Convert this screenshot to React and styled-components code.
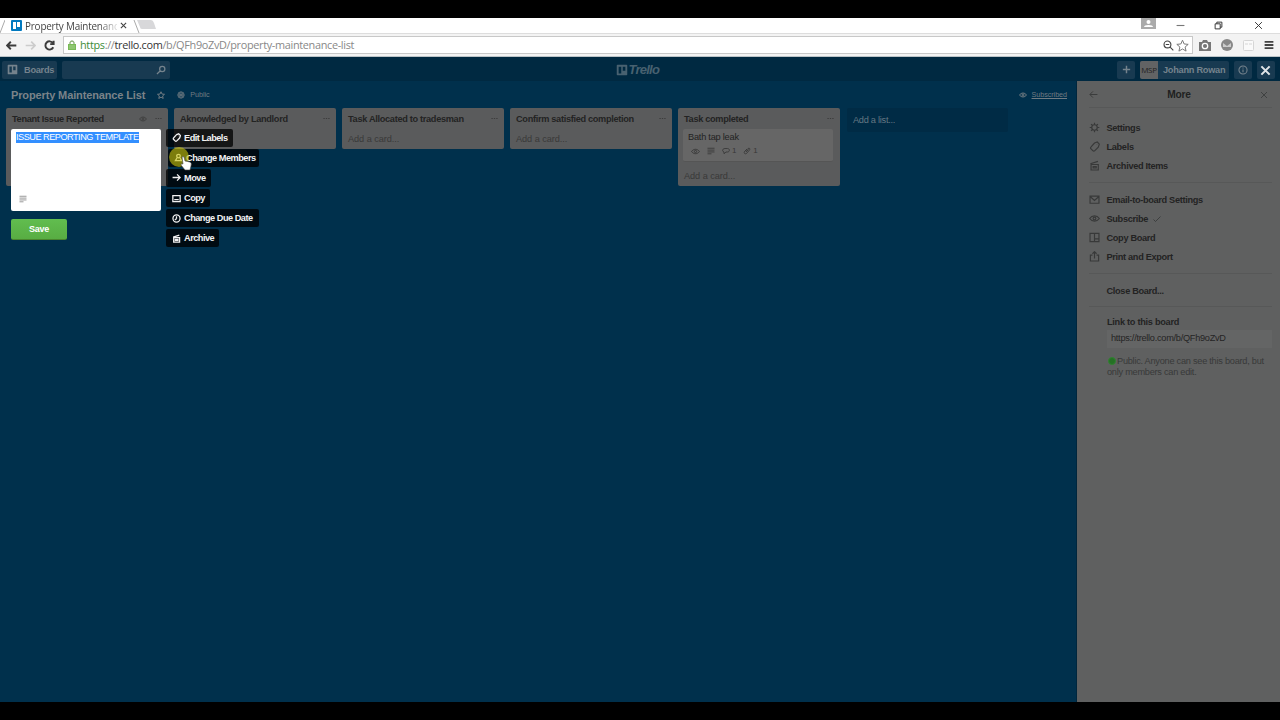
import React from 'react'
import styled, { createGlobalStyle } from 'styled-components'

const GlobalStyle = createGlobalStyle`
	* {
		box-sizing: border-box;
	}

	body {
		margin: 0;
		background: #000;
		font-family: "Liberation Sans", Arial, sans-serif;
		font-size: 9.2px;
		line-height: 12px;
	}

	svg {
		display: block;
		flex: none;
	}
`

const icons = {
  board: <path d="M2 1h12q1 0 1 1v12q0 1-1 1H2q-1 0-1-1V2q0-1 1-1zM3.500 3.500v9h3.500v-9zM9 3.500v5.500h3.500V3.500z" fill="currentColor" fillRule="evenodd" stroke="none" />,
  boardOutline: <g><path d="M1.500 2h13v12h-13zM8 2v12M8 10h6.500" /></g>,
  search: <path d="M10 2a4.200 4.200 0 1 1 0 8.400a4.200 4.200 0 0 1 0-8.400M7 9.200L1.500 14.500" />,
  zoomOut: <path d="M6.500 1.500a5 5 0 1 1 0 10a5 5 0 0 1 0-10M10 10l5 5M4 6.500h5" />,
  star: <path d="M8 1.500l2 4.600 5 .5-3.800 3.300 1.200 5L8 12.300 3.600 14.900l1.200-5L1 6.600l5-.5z" />,
  globe: <g><circle cx="8" cy="8" r="6.300" /><path d="M8 1.500v13M1.500 8h13M4 3.500c3 3 3 6 0 9M12 3.500c-3 3-3 6 0 9" /></g>,
  eye: <g><path d="M1 8c3.500-5.200 10.500-5.200 14 0c-3.500 5.200-10.500 5.200-14 0z" /><circle cx="8" cy="8" r="2" /></g>,
  gear: <g><circle cx="8" cy="8" r="4" /><path d="M8 1v3M8 12v3M1 8h3M12 8h3M3 3l2 2M11 11l2 2M13 3l-2 2M5 11l-2 2" /></g>,
  label: <g><path d="M8 3l4-1.500 3 3-1.500 4.500-5 5c-1 1-2 1-3 0l-2.500-2.500c-1-1-1-2 0-3z" /><path d="M11.500 5v.500" /></g>,
  archive: <path d="M2 5.500L13 2M3 6.500h10.500v8H3zM6 9.500h4.500v2H6z" />,
  mail: <path d="M1.500 3h13v10.500h-13zM2 4l6 5.500L14 4" />,
  share: <path d="M5 6H2v8.500h12V6h-3M8 11V1.500M5 4l3-3 3 3" />,
  check: <path d="M1 9l4 4L15 3" />,
  close: <path d="M2 2l12 12M14 2L2 14" />,
  minus: <path d="M1 8h14" />,
  restore: <path d="M2 5h9v9H2zM5 5V2h9v9h-3" />,
  plus: <path d="M8 1.500v13M1.500 8h13" />,
  left: <path d="M15 8H2M7 2.500L1.500 8L7 13.500" />,
  right: <path d="M1 8h13M9 2.500L14.500 8L9 13.500" />,
  reload: <path d="M13.500 10.500a6 6 0 1 1-.5-6M14 1v5H9" />,
  info: <g><circle cx="8" cy="8" r="6.500" /><path d="M8 7v4.500M8 4v1.500" /></g>,
  clock: <g><circle cx="8" cy="8" r="6.300" /><path d="M8 8.500V4M8 8.500l-3 2" /></g>,
  text: <path d="M1 2.500h14M1 6.200h14M1 9.900h14M1 13.600h8" />,
  comment: <path d="M6 3h5c5 0 5 7 0 7H8l-4 3.500V10C-.5 9 .5 3 6 3z" />,
  clip: <path d="M4 9l6-6c3-2 5 1 3 3l-6 7c-3 2-6-1-4-4l5-5M6 10l5-5" />,
  person: <g><circle cx="8" cy="5.500" r="3.200" /><path d="M5.500 8.500L2.500 13.500h11L10.500 8.500" /></g>,
  card: <path d="M1.500 3h13v10.500h-13zM4 10h8" />,
  menu: <path d="M1 3h14M1 8h14M1 13h14" />,
  dots: <path d="M1 8h3M6.500 8h3M12 8h3" />,
}

const Icon = ({ name, size = 9, weight = 1.7, color = 'currentColor' }) => (
  <svg width={size} height={size} viewBox="0 0 16 16" color={color === 'currentColor' ? undefined : color} fill="none" stroke={color} strokeWidth={weight}>
    {icons[name]}
  </svg>
)

const Screen = styled.div`
	width: 1280px;
	height: 720px;
	padding: 18px 0;
	overflow: hidden;
	position: relative;
	display: flex;
	flex-direction: column;
`

const TabStrip = styled.div`
	height: 15px;
	flex: none;
	background: #fff;
	display: flex;
	font: 9.9px/14px "Open Sans", sans-serif;
	color: #444;
`

const Tab = styled.div`
	width: 124px;
	padding-left: 6px;
	display: flex;
	align-items: center;
	gap: 3px;
`

const TabTitle = styled.span`
	width: 92px;
	white-space: nowrap;
	letter-spacing: -0.18px;
	mask-image: linear-gradient(to right, #000 80%, transparent 104%);
`

const WindowButtons = styled.div`
	margin-left: auto;
	display: flex;
	align-items: center;
	color: #333;
`

const Profile = styled.div`
	width: 15px;
	height: 11px;
	margin: 0 20px 4px 0;
	background: #aaa;
	color: #fff;
	display: flex;
	align-items: center;
	justify-content: center;
`

const WindowButton = styled.div`
	width: 10px;
	margin-right: ${p => p.$gap}px;
`

const Toolbar = styled.div`
	height: 24px;
	flex: none;
	background: #f3f3f3;
	border-top: 1px solid #ddd;
	border-bottom: 1px solid #bcc4c8;
	padding-left: 6px;
	display: flex;
	align-items: center;
	color: #444;
`

const NavButton = styled.div`
	width: 19px;
	flex: none;
	color: ${p => p.$off ? '#ccc' : '#3c3c3c'};
`

const Address = styled.div`
	width: 1130px;
	height: 18px;
	flex: none;
	background: #fff;
	border: 1px solid #c8c8c8;
	padding: 0 3px 0 4px;
	display: flex;
	align-items: center;
	font: 10.9px/16px "Open Sans", sans-serif;
	letter-spacing: -0.33px;
	color: #888;
`

const Url = styled.div`
	flex: 1;
	margin-left: 4px;
	b {
		font-weight: 400;
		color: #3d8b37;
	}
	span {
		color: #333;
	}
`

const Extensions = styled.div`
	margin-left: 6px;
	display: flex;
	align-items: center;
	gap: 10px;
`

const Header = styled.div`
	height: 24px;
	flex: none;
	padding: 1px 5px 0 2px;
	background: #002941;
	display: grid;
	grid-template-columns: 1fr 46px 1fr;
	align-items: center;
	color: #5c6f7d;
`

const HeaderGroup = styled.div`
	display: flex;
	gap: ${p => p.$gap}px;
	justify-content: ${p => p.$end ? 'flex-end' : 'flex-start'};
`

const HeaderButton = styled.div`
	width: ${p => p.$width}px;
	height: 18px;
	background: #183a51;
	border-radius: 2px;
	display: flex;
	align-items: center;
	justify-content: ${p => p.$align || 'center'};
	padding: ${p => p.$pad || '0'};
	font-weight: 700;
	letter-spacing: -0.25px;
	gap: 6px;
	color: #75838d;
`

const Avatar = styled.div`
	width: 18px;
	height: 18px;
	background: #626364;
	color: #222;
	font: 8px/18px "Open Sans", sans-serif;
	text-align: center;
	border-radius: 2px 0 0 2px;
	margin-right: -1px;
`

const Logo = styled.div`
	display: flex;
	align-items: center;
	gap: 1px;
	color: #486170;
	font: italic 700 13px/16px "Liberation Sans", sans-serif;
	letter-spacing: -0.75px;
`

const Main = styled.div`
	flex: 1;
	display: flex;
	background: #00304c;
`

const Board = styled.div`
	width: 1077px;
	flex: none;
	border-right: 1px solid #00263d;
`

const BoardHeader = styled.div`
	height: 26px;
	padding: 1px 9px 0 11px;
	display: flex;
	align-items: center;
	color: #707b82;
	font-size: 7.2px;
`

const BoardTitle = styled.h1`
	margin: 0 12px 0 0;
	font-size: 11px;
	letter-spacing: -0.13px;
	color: #7a8389;
`

const Visibility = styled.div`
	display: flex;
	align-items: center;
	gap: 5px;
	margin-left: 12px;
	letter-spacing: -0.05px;
`

const Subscribed = styled(Visibility)`
	margin-left: auto;
	text-decoration: underline;
`

const Lists = styled.div`
	display: flex;
	align-items: flex-start;
	gap: 6px;
	padding: 1px 0 0 6px;
`

const List = styled.div`
	width: 162px;
	min-height: ${p => p.$height}px;
	background: #5a5b5c;
	border-radius: 2px;
	padding: 4px 6px 4px;
	display: flex;
	flex-direction: column;
`

const ListHeader = styled.div`
	display: flex;
	align-items: center;
	height: 13px;
	gap: 8px;
	margin-bottom: 4px;
	font-weight: 700;
	color: #232323;
`

const ListName = styled.span`
	flex: 1;
	white-space: nowrap;
	letter-spacing: -0.31px;
`

const AddCard = styled.div`
	margin-top: auto;
	color: #393939;
	letter-spacing: -0.06px;
`

const Card = styled.div`
	width: 150px;
	height: 33px;
	margin-left: -1px;
	padding: 2px 5px;
	background: #666;
	border-bottom: 1px solid #555;
	border-radius: 2px;
	color: #222;
	letter-spacing: -0.22px;
`

const Badges = styled.div`
	display: flex;
	align-items: center;
	gap: 7px;
	margin: 2px 0 0 3px;
	color: #383838;
	font-size: 8px;
`

const Badge = styled.div`
	display: flex;
	align-items: center;
	gap: 2px;
`

const AddList = styled.div`
	width: 161px;
	height: 24px;
	padding: 6px 6px;
	background: #002b45;
	border-radius: 2px;
	color: #647884;
	margin-left: 1px;
	letter-spacing: -0.26px;
`

const Panel = styled.div`
	flex: 1;
	min-width: 0;
	background: #5f6060;
	padding: 0 8px 0 12px;
	color: #232323;
`

const PanelHeader = styled.div`
	height: 27px;
	display: flex;
	align-items: center;
	justify-content: space-between;
	padding: 1px 4px 0 0;
	border-bottom: 1px solid #575858;
	font-size: 10.2px;
	font-weight: 700;
	letter-spacing: -0.2px;
	color: #3a3b3b;
	span {
		color: #202020;
	}
`

const PanelGroup = styled.div`
	height: ${p => p.$height}px;
	padding-top: ${p => p.$top}px;
	border-bottom: 1px solid #575858;
`

const PanelItem = styled.div`
	height: 19.100px;
	display: flex;
	align-items: center;
	font-weight: 700;
	gap: 5px;
	letter-spacing: -0.32px;
	span {
		margin-left: 1.500px;
	}
	svg {
		color: #383939;
	}
`

const LinkBlock = styled.div`
	padding: 9px 0 0 18px;
	color: #383939;
	strong {
		display: block;
		color: #232323;
		letter-spacing: -0.28px;
	}
	p {
		margin: 8px 0 0;
		line-height: 10.600px;
		letter-spacing: -0.25px;
		white-space: nowrap;
	}
`

const LinkField = styled.div`
	height: 18px;
	margin-top: 2px;
	padding: 0 4px;
	background: #646565;
	line-height: 17px;
	letter-spacing: -0.27px;
	color: #242424;
`

const PublicDot = styled.i`
	display: inline-block;
	width: 8px;
	height: 8px;
	margin: 0 1px -1px 1px;
	border-radius: 50%;
	background: #257125;
	border: 1px solid #318231;
`

const QuickEdit = styled.div`
	position: absolute;
	left: 11px;
	top: 128px;
	display: flex;
	gap: 5px;
`

const Editor = styled.div`
	width: 150px;
	height: 82px;
	margin-top: 1px;
	padding: 3px 5px 8px;
	background: #fff;
	border-radius: 2px;
	display: flex;
	flex-direction: column;
	justify-content: space-between;
	align-items: flex-start;
	color: #8c8c8c;
`

const Selection = styled.span`
	background: #338fff;
	color: #fff;
	line-height: 11px;
	letter-spacing: -0.51px;
	white-space: nowrap;
`

const EditorBadge = styled.div`
	margin-left: 3px;
	color: #999;
`

const Save = styled.button`
	display: block;
	width: 56px;
	height: 21px;
	margin-top: 8px;
	padding: 0;
	border: 0;
	border-bottom: 1px solid #49852e;
	border-radius: 2px;
	background: linear-gradient(#61bd4f, #58ad43);
	color: #fff;
	font: 700 9px "Liberation Sans", sans-serif;
	letter-spacing: -0.3px;
`

const Actions = styled.div`
	display: flex;
	flex-direction: column;
	align-items: flex-start;
	gap: 2.200px;
	padding-top: 0.500px;
`

const Action = styled.div`
	width: ${p => p.$width}px;
	height: 18px;
	margin-left: ${p => p.$hover ? 2 : 0}px;
	padding-left: 6px;
	background: rgba(0, 0, 0, 0.76);
	border-radius: 2px;
	display: flex;
	align-items: center;
	gap: 3px;
	color: #f2f2f2;
	font-weight: 700;
	letter-spacing: -0.5px;
	white-space: nowrap;
`

const Highlight = styled.div`
	position: absolute;
	left: 169px;
	top: 147px;
	width: 20px;
	height: 20px;
	border-radius: 50%;
	background: rgba(200, 195, 10, 0.62);
`

const Pointer = styled.svg`
	position: absolute;
	left: 180px;
	top: 156px;
`

const CloseOverlay = styled.div`
	position: absolute;
	left: 1260px;
	top: 65px;
	color: #e0e4e7;
`

const lists = [
  { name: 'Tenant Issue Reported', height: 78, watched: true },
  { name: 'Aknowledged by Landlord', height: 41 },
  { name: 'Task Allocated to tradesman', height: 41, add: true },
  { name: 'Confirm satisfied completion', height: 41, add: true },
  { name: 'Task completed', height: 78, card: 'Bath tap leak', add: true },
]

const actions = [
  { icon: 'label', text: 'Edit Labels', width: 67 },
  { icon: 'person', text: 'Change Members', width: 91, hover: true },
  { icon: 'right', text: 'Move', width: 45 },
  { icon: 'card', text: 'Copy', width: 44 },
  { icon: 'clock', text: 'Change Due Date', width: 93 },
  { icon: 'archive', text: 'Archive', width: 53 },
]

const Browser = () => (
  <>
    <TabStrip>
      <svg width="5" height="15"><path d="M0 15L5 2" stroke="#aaa" fill="none" /></svg>
      <Tab>
        <svg width="11" height="11" viewBox="0 0 11 11"><rect width="11" height="11" rx="1" fill="#0079bf" /><path d="M2 2h3v7H2zM6 2h3v5H6z" fill="#fff" /></svg>
        <TabTitle>Property Maintenanc</TabTitle>
        <Icon name="close" size={7} weight={2.500} />
      </Tab>
      <svg width="30" height="15"><path d="M5 2l5 13" stroke="#aaa" fill="none" /><path d="M8 2h14q2 0 3 3l2 6H13q-2 0-2-2z" fill="#d8d8da" /></svg>
      <WindowButtons>
        <Profile><svg width="9" height="8" viewBox="0 0 9 8" fill="#fff"><circle cx="4.5" cy="2" r="2" /><path d="M0 7q0-2 4.500-2T9 7z" /></svg></Profile>
        <WindowButton $gap={28}><Icon name="minus" size={9} weight={2} color="#777" /></WindowButton>
        <WindowButton $gap={30}><Icon name="restore" size={9} /></WindowButton>
        <WindowButton $gap={16}><Icon name="close" size={9} /></WindowButton>
      </WindowButtons>
    </TabStrip>
    <Toolbar>
      <NavButton><Icon name="left" size={11} weight={2.800} /></NavButton>
      <NavButton $off><Icon name="right" size={11} weight={2.500} /></NavButton>
      <NavButton><Icon name="reload" size={11} weight={2.800} /></NavButton>
      <Address>
        <svg width="8" height="10" viewBox="0 0 8 10"><path d="M2 5V2.500q2-3 4 0V5" stroke="#8cae77" strokeWidth="1.300" fill="none" /><rect y="4" width="8" height="6" fill="#78b956" /><path d="M1 6h6M1 8h6" stroke="#a4d389" /></svg>
        <Url><b>https</b>://<span>trello.com</span>/b/QFh9oZvD/property-maintenance-list</Url>
        <Icon name="zoomOut" size={11} weight={1.600} color="#444" />
        <svg width="2" height="1" />
        <Icon name="star" size={13} weight={1.200} color="#777" />
      </Address>
      <Extensions>
        <svg width="12" height="11" viewBox="0 0 12 11"><path d="M0 2h3l1-2h4l1 2h3v9H0z" fill="#777" /><circle cx="6" cy="6" r="2.700" fill="#777" stroke="#fff" strokeWidth="1.300" /></svg>
        <svg width="12" height="12" viewBox="0 0 12 12"><circle cx="6" cy="6" r="6" fill="#888" /><path d="M2 4l4 3 4-3v4H2z" fill="#ccc" /></svg>
        <svg width="11" height="11" viewBox="0 0 11 11" fill="none" stroke="#d6d6d6"><rect x=".5" y=".5" width="10" height="10" rx="1" fill="#fafafa" /><path d="M2 4h3M6 4h3" /></svg>
        <Icon name="menu" size={10} weight={3} />
      </Extensions>
    </Toolbar>
  </>
)

const App = () => (
  <Screen>
    <GlobalStyle />
    <Browser />
    <Header>
      <HeaderGroup $gap={5}>
        <HeaderButton $width={55} $align="flex-start" $pad="0 5px"><Icon name="board" size={11} />Boards</HeaderButton>
        <HeaderButton $width={108} $align="flex-end" $pad="0 4px"><Icon name="search" size={10} weight={2} /></HeaderButton>
      </HeaderGroup>
      <Logo><Icon name="board" size={12} />Trello</Logo>
      <HeaderGroup $gap={5} $end>
        <HeaderButton $width={18}><Icon name="plus" size={9} weight={2.600} /></HeaderButton>
        <HeaderButton $width={89} $align="flex-start"><Avatar>MSP</Avatar>Johann Rowan</HeaderButton>
        <HeaderButton $width={18}><Icon name="info" size={10} /></HeaderButton>
        <HeaderButton $width={18} />
      </HeaderGroup>
    </Header>
    <Main>
      <Board>
        <BoardHeader>
          <BoardTitle>Property Maintenance List</BoardTitle>
          <Icon name="star" size={8} weight={2} />
          <Visibility><Icon name="globe" size={8} />Public</Visibility>
          <Subscribed><Icon name="eye" size={8} weight={2} />Subscribed</Subscribed>
        </BoardHeader>
        <Lists>
          {lists.map(list => (
            <List key={list.name} $height={list.height}>
              <ListHeader>
                <ListName>{list.name}</ListName>
                {list.watched && <Icon name="eye" size={8} color="#3c3c3c" />}
                <Icon name="dots" size={7} weight={2.500} color="#3c3c3c" />
              </ListHeader>
              {list.card && (
                <Card>
                  {list.card}
                  <Badges>
                    <Icon name="eye" size={9} />
                    <Icon name="text" size={8} />
                    <Badge><Icon name="comment" size={8} />1</Badge>
                    <Badge><Icon name="clip" size={8} />1</Badge>
                  </Badges>
                </Card>
              )}
              {list.add && <AddCard>Add a card...</AddCard>}
            </List>
          ))}
          <AddList>Add a list...</AddList>
        </Lists>
      </Board>
      <Panel>
        <PanelHeader>
          <Icon name="left" size={9} />
          <span>More</span>
          <Icon name="close" size={8} />
        </PanelHeader>
        <PanelGroup $height={75} $top={10}>
          <PanelItem><Icon name="gear" size={11} /><span>Settings</span></PanelItem>
          <PanelItem><Icon name="label" size={11} /><span>Labels</span></PanelItem>
          <PanelItem><Icon name="archive" size={11} /><span>Archived Items</span></PanelItem>
        </PanelGroup>
        <PanelGroup $height={91} $top={7}>
          <PanelItem><Icon name="mail" size={11} /><span>Email-to-board Settings</span></PanelItem>
          <PanelItem><Icon name="eye" size={11} /><span>Subscribe</span><Icon name="check" size={8} /></PanelItem>
          <PanelItem><Icon name="boardOutline" size={11} /><span>Copy Board</span></PanelItem>
          <PanelItem><Icon name="share" size={11} /><span>Print and Export</span></PanelItem>
        </PanelGroup>
        <PanelGroup $height={33} $top={7}>
          <PanelItem><svg width="11" height="11" /><span>Close Board...</span></PanelItem>
        </PanelGroup>
        <LinkBlock>
          <strong>Link to this board</strong>
          <LinkField>https://trello.com/b/QFh9oZvD</LinkField>
          <p><PublicDot />Public. Anyone can see this board, but<br />only members can edit.</p>
        </LinkBlock>
      </Panel>
    </Main>
    <QuickEdit>
      <div>
        <Editor>
          <Selection>ISSUE REPORTING TEMPLATE</Selection>
          <EditorBadge><Icon name="text" size={8} weight={2} /></EditorBadge>
        </Editor>
        <Save>Save</Save>
      </div>
      <Actions>
        {actions.map(action => (
          <Action key={action.text} $width={action.width} $hover={action.hover}>
            <Icon name={action.icon} size={9} weight={2.300} />
            {action.text}
          </Action>
        ))}
      </Actions>
    </QuickEdit>
    <Highlight />
    <Pointer width="12" height="16" viewBox="0 0 12 16"><path d="M2 1q1-1 2 0l1 4 5 1q2 1 1 4l-1 4H5L1 9q0-2 2-1z" fill="#fff" stroke="#444" strokeWidth=".6" /></Pointer>
    <CloseOverlay><Icon name="close" size={11} weight={3} /></CloseOverlay>
  </Screen>
)

export default App
